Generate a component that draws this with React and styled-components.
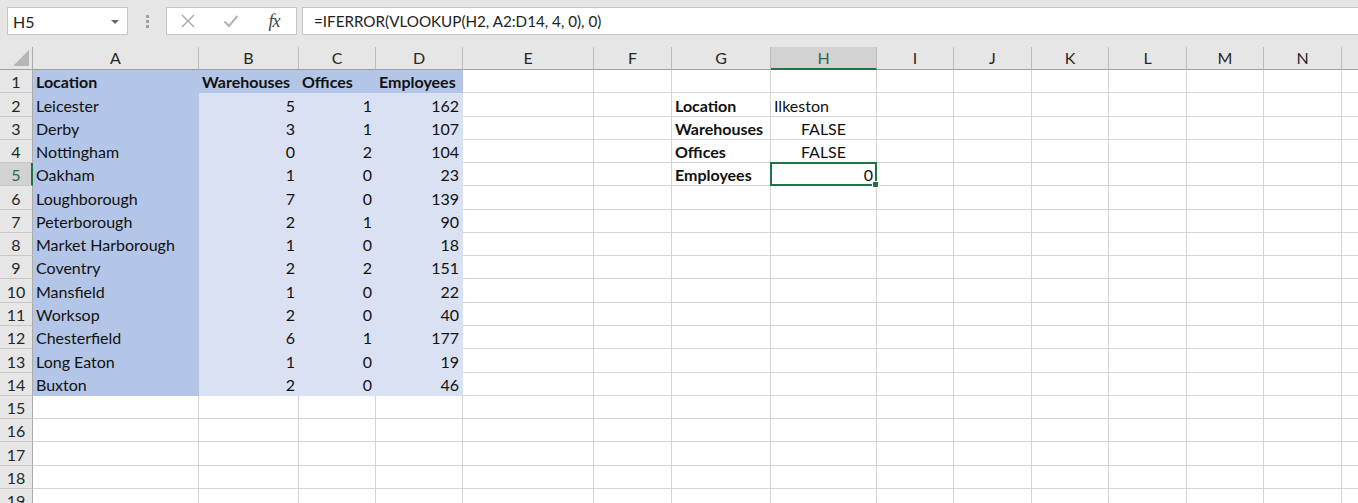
import React from 'react';
import styled, { createGlobalStyle } from 'styled-components';

const GlobalStyle = createGlobalStyle`
  html, body {
    margin: 0;
    padding: 0;
    background: #ffffff;
    overflow: hidden;
  }
  body {
    font-family: Lato, "Liberation Sans", sans-serif;
    color: #222222;
  }
`;

const DARK_FILL = '#b4c6e7';
const LIGHT_FILL = '#d9e1f2';
const GREEN = '#217346';

const COLUMNS = [
  { name: 'A', w: 166 },
  { name: 'B', w: 100 },
  { name: 'C', w: 77 },
  { name: 'D', w: 87 },
  { name: 'E', w: 131 },
  { name: 'F', w: 78 },
  { name: 'G', w: 99 },
  { name: 'H', w: 106 },
  { name: 'I', w: 77 },
  { name: 'J', w: 78 },
  { name: 'K', w: 77 },
  { name: 'L', w: 78 },
  { name: 'M', w: 77 },
  { name: 'N', w: 78 },
  { name: '', w: 78 },
];

const ROW_COUNT = 19;

const DATA = [
  ['Leicester', 5, 1, 162],
  ['Derby', 3, 1, 107],
  ['Nottingham', 0, 2, 104],
  ['Oakham', 1, 0, 23],
  ['Loughborough', 7, 0, 139],
  ['Peterborough', 2, 1, 90],
  ['Market Harborough', 1, 0, 18],
  ['Coventry', 2, 2, 151],
  ['Mansfield', 1, 0, 22],
  ['Worksop', 2, 0, 40],
  ['Chesterfield', 6, 1, 177],
  ['Long Eaton', 1, 0, 19],
  ['Buxton', 2, 0, 46],
];

const LOOKUP = [
  ['Location', 'Ilkeston', 'left'],
  ['Warehouses', 'FALSE', 'center'],
  ['Offices', 'FALSE', 'center'],
  ['Employees', '0', 'right'],
];

const SELECTED = { row: 5, col: 'H' };

// row boundaries drift a little, so build them from the measured pitch
const rowHeights = () => {
  const heights = ['23px'];
  let prev = 70;
  for (let i = 1; i <= ROW_COUNT; i++) {
    const next = Math.round(70 + i * 23.27);
    heights.push(`${next - prev}px`);
    prev = next;
  }
  return heights.join(' ');
};

const getCell = (row, colIndex) => {
  const blank = { text: '', bold: false, align: 'left', fill: null };
  if (row === 1 && colIndex <= 3) {
    const heads = ['Location', 'Warehouses', 'Offices', 'Employees'];
    return { text: heads[colIndex], bold: true, align: 'left', fill: DARK_FILL };
  }
  if (row >= 2 && row <= 14 && colIndex <= 3) {
    const rec = DATA[row - 2];
    if (colIndex === 0) return { text: rec[0], bold: false, align: 'left', fill: DARK_FILL };
    return { text: String(rec[colIndex]), bold: false, align: 'right', fill: LIGHT_FILL };
  }
  if (row >= 2 && row <= 5) {
    const rec = LOOKUP[row - 2];
    if (colIndex === 6) return { text: rec[0], bold: true, align: 'left', fill: null };
    if (colIndex === 7) return { text: rec[1], bold: false, align: rec[2], fill: null };
  }
  return blank;
};

/* ---------- formula bar ---------- */

const Toolbar = styled.div`
  height: 47px;
  box-sizing: border-box;
  background: #e6e6e6;
  display: flex;
  align-items: flex-start;
  padding: 7px 0 0 7px;
`;

const NameBox = styled.div`
  width: 121px;
  height: 28px;
  box-sizing: border-box;
  background: #ffffff;
  border: 1px solid #c6c6c6;
  display: flex;
  align-items: center;
  justify-content: space-between;
  padding: 0 8px 0 5px;
  font-size: 16px;
  color: #222222;
`;

const DropArrow = styled.span`
  width: 0;
  height: 0;
  border-left: 4px solid transparent;
  border-right: 4px solid transparent;
  border-top: 4px solid #666666;
  margin-top: 2px;
`;

const Grip = styled.div`
  width: 38px;
  height: 28px;
  display: flex;
  flex-direction: column;
  align-items: center;
  justify-content: center;
  gap: 2px;
`;

const GripDot = styled.span`
  width: 3px;
  height: 3px;
  background: #a0a0a0;
`;

const FnButtons = styled.div`
  width: 131px;
  height: 28px;
  box-sizing: border-box;
  background: #ffffff;
  border: 1px solid #c6c6c6;
  display: flex;
  align-items: center;
  padding-left: 13px;
`;

const FnIcon = styled.span`
  width: ${p => p.$w}px;
  display: flex;
  align-items: center;
  justify-content: center;
`;

const FxLabel = styled.span`
  font-family: "Liberation Serif", "DejaVu Serif", serif;
  font-style: italic;
  font-size: 18px;
  color: #444444;
  letter-spacing: -1px;
  line-height: 1;
`;

const FormulaInput = styled.div`
  flex: 1;
  height: 28px;
  box-sizing: border-box;
  margin-left: 5px;
  background: #ffffff;
  border: 1px solid #c6c6c6;
  border-right: none;
  display: flex;
  align-items: center;
  padding-left: 11px;
  font-size: 15.2px;
  color: #222222;
  white-space: nowrap;
`;

/* ---------- sheet grid ---------- */

const Viewport = styled.div`
  width: 100vw;
  height: calc(100vh - 47px);
  overflow: hidden;
`;

const Sheet = styled.div`
  display: grid;
  grid-template-columns: ${p => p.$cols};
  grid-template-rows: ${p => p.$rows};
  width: 1420px;
  font-size: 16px;
`;

const Corner = styled.div`
  background: #e6e6e6;
  border-right: 1px solid #ababab;
  border-bottom: 1px solid #a0a0a0;
  box-sizing: border-box;
  display: flex;
  align-items: flex-end;
  justify-content: flex-end;
  padding: 0 3px 3px 0;
`;

const ColHead = styled.div`
  box-sizing: border-box;
  background: ${p => (p.$active ? '#d2d2d2' : '#e6e6e6')};
  border-right: 1px solid #bcbcbc;
  border-bottom: ${p => (p.$active ? `2px solid ${GREEN}` : '1px solid #a0a0a0')};
  color: ${p => (p.$active ? GREEN : '#262626')};
  display: flex;
  align-items: center;
  justify-content: center;
  padding-bottom: 1px;
`;

const RowHead = styled.div`
  box-sizing: border-box;
  background: ${p => (p.$active ? '#d2d2d2' : '#e6e6e6')};
  border-right: ${p => (p.$active ? `2px solid ${GREEN}` : '1px solid #ababab')};
  border-bottom: 1px solid #c8c8c8;
  color: ${p => (p.$active ? GREEN : '#262626')};
  display: flex;
  align-items: flex-end;
  justify-content: center;
  padding: 0 0 1px ${p => (p.$active ? '1px' : '0')};
`;

const Cell = styled.div`
  position: relative;
  box-sizing: border-box;
  min-width: 0;
  background: ${p => p.$fill || '#ffffff'};
  border-right: 1px solid ${p => p.$fill || '#d4d4d4'};
  border-bottom: 1px solid ${p => p.$fill || '#d4d4d4'};
  display: flex;
  align-items: flex-end;
  justify-content: ${p => (p.$align === 'right' ? 'flex-end' : p.$align === 'center' ? 'center' : 'flex-start')};
  padding: 0 3px 1px 3px;
  font-weight: ${p => (p.$bold ? 700 : 400)};
  color: #111111;
  white-space: nowrap;
  z-index: ${p => (p.$selected ? 2 : 'auto')};
`;

const SelectionFrame = styled.span`
  position: absolute;
  top: -1px;
  left: -1px;
  right: -1px;
  bottom: -1px;
  border: 2px solid ${GREEN};
  pointer-events: none;
`;

const FillHandle = styled.span`
  position: absolute;
  right: -4px;
  bottom: -4px;
  width: 5px;
  height: 5px;
  background: ${GREEN};
  border: 1px solid #ffffff;
`;

function FormulaBar() {
  return (
    <Toolbar>
      <NameBox>
        <span>H5</span>
        <DropArrow />
      </NameBox>
      <Grip>
        <GripDot />
        <GripDot />
        <GripDot />
      </Grip>
      <FnButtons>
        <FnIcon $w={16}>
          <svg width="14" height="14" viewBox="0 0 14 14">
            <path d="M1 1 L13 13 M13 1 L1 13" stroke="#a8a8a8" strokeWidth="1.4" fill="none" />
          </svg>
        </FnIcon>
        <FnIcon $w={70}>
          <svg width="16" height="14" viewBox="0 0 16 14">
            <path d="M1.5 7.5 L6 12 L14.5 2" stroke="#b5b5b5" strokeWidth="2.2" fill="none" />
          </svg>
        </FnIcon>
        <FnIcon $w={16}>
          <FxLabel>fx</FxLabel>
        </FnIcon>
      </FnButtons>
      <FormulaInput>=IFERROR(VLOOKUP(H2, A2:D14, 4, 0), 0)</FormulaInput>
    </Toolbar>
  );
}

function Grid() {
  const cols = `33px ${COLUMNS.map(c => `${c.w}px`).join(' ')}`;
  const cells = [];

  cells.push(
    <Corner key="corner">
      <svg width="16" height="16" viewBox="0 0 16 16">
        <polygon points="16,0 16,16 0,16" fill="#b6b6b6" />
      </svg>
    </Corner>
  );
  COLUMNS.forEach((c, ci) => {
    cells.push(
      <ColHead key={`h-${ci}`} $active={c.name === SELECTED.col}>
        {c.name}
      </ColHead>
    );
  });

  for (let r = 1; r <= ROW_COUNT; r++) {
    cells.push(
      <RowHead key={`r-${r}`} $active={r === SELECTED.row}>
        {r}
      </RowHead>
    );
    COLUMNS.forEach((c, ci) => {
      const cell = getCell(r, ci);
      const selected = r === SELECTED.row && c.name === SELECTED.col;
      cells.push(
        <Cell
          key={`${ci}-${r}`}
          $fill={cell.fill}
          $bold={cell.bold}
          $align={cell.align}
          $selected={selected}
        >
          {cell.text}
          {selected && (
            <SelectionFrame>
              <FillHandle />
            </SelectionFrame>
          )}
        </Cell>
      );
    });
  }

  return (
    <Viewport>
      <Sheet $cols={cols} $rows={rowHeights()}>
        {cells}
      </Sheet>
    </Viewport>
  );
}

export default function App() {
  return (
    <>
      <GlobalStyle />
      <FormulaBar />
      <Grid />
    </>
  );
}
